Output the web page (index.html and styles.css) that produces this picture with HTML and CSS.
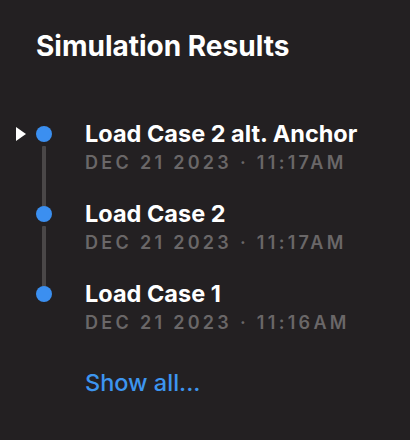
FILE: index.html
```html
<!DOCTYPE html>
<html lang="en">

<head>
    <meta charset="UTF-8">
    <meta name="viewport" content="width=device-width, initial-scale=1.0">
    <title>Simulation Results</title>
    <link rel="stylesheet" href="styles.css">
</head>

<body>
    <div class="panel">
        <h1 class="title">Simulation Results</h1>
        <ul class="timeline">
            <li class="entry current">
                <div class="marker">
                    <span class="pointer"></span>
                    <span class="dot"></span>
                    <span class="line"></span>
                </div>
                <div class="info">
                    <div class="name">Load Case 2 alt. Anchor</div>
                    <div class="date">DEC 21 2023 · 11:17AM</div>
                </div>
            </li>
            <li class="entry">
                <div class="marker">
                    <span class="dot"></span>
                    <span class="line"></span>
                </div>
                <div class="info">
                    <div class="name">Load Case 2</div>
                    <div class="date">DEC 21 2023 · 11:17AM</div>
                </div>
            </li>
            <li class="entry">
                <div class="marker">
                    <span class="dot"></span>
                </div>
                <div class="info">
                    <div class="name">Load Case 1</div>
                    <div class="date">DEC 21 2023 · 11:16AM</div>
                </div>
            </li>
        </ul>
        <a class="show-all" href="#">Show all...</a>
    </div>
</body>

</html>
```

FILE: styles.css
```css
body {
    background-color: #232022;
    margin: 0;
    color: #ffffff;
    font-family: Inter, "Noto Sans", sans-serif;
}

.panel {
    padding: 28px 0 0 36px;
}

.title {
    font-size: 28px;
    font-weight: 700;
    margin: 0 0 62px 0;
    line-height: 36px;
}

.timeline {
    list-style: none;
    margin: 0;
    padding: 0;
}

.entry {
    display: flex;
    height: 80px;
}

.marker {
    position: relative;
    width: 16px;
    display: flex;
    flex-direction: column;
    align-items: center;
}

.pointer {
    position: absolute;
    left: -20px;
    top: 1px;
    width: 0;
    height: 0;
    border-top: 7px solid transparent;
    border-bottom: 7px solid transparent;
    border-left: 10px solid #ffffff;
}

.dot {
    width: 16px;
    height: 16px;
    border-radius: 50%;
    background-color: #3b8ff0;
    flex-shrink: 0;
}

.line {
    width: 4px;
    flex: 1;
    margin: 4px 0 -4px 0;
    background-color: #4a4748;
    border-radius: 1px;
}

.info {
    margin-left: 33px;
    margin-top: -7px;
}

.name {
    font-size: 23.5px;
    font-weight: 700;
    line-height: 30px;
}

.date {
    font-size: 18px;
    font-weight: 600;
    color: #6a6768;
    letter-spacing: 3.3px;
    line-height: 27px;
}

.show-all {
    display: inline-block;
    margin: 2px 0 0 49px;
    font-size: 23.5px;
    font-weight: 500;
    color: #3d95ef;
    text-decoration: none;
}
```
